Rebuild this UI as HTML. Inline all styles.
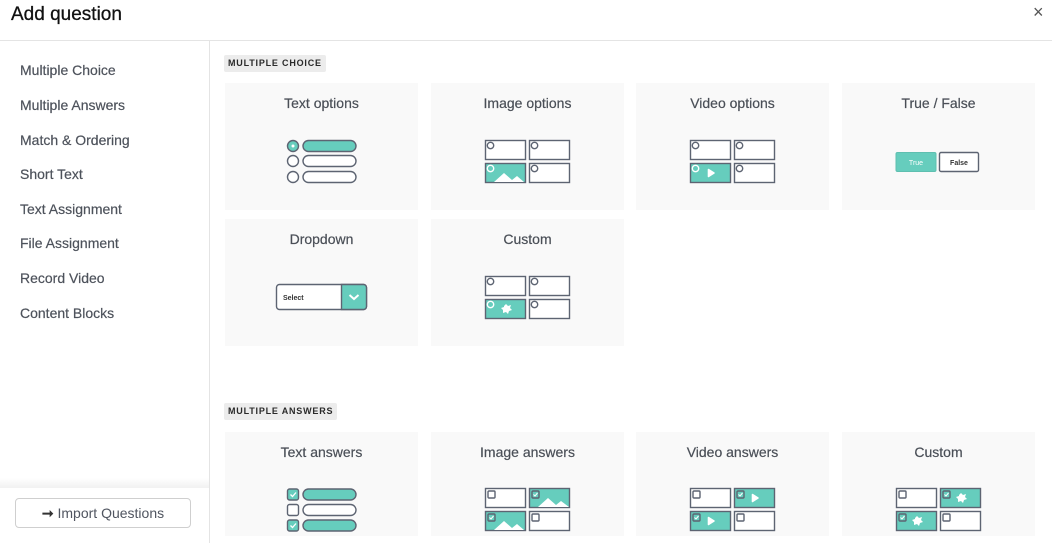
<!DOCTYPE html>
<html><head><meta charset="utf-8"><style>
*{margin:0;padding:0;box-sizing:border-box}
body{width:1052px;height:543px;overflow:hidden;background:#fff;font-family:"Liberation Sans",sans-serif;position:relative;color:#4a4f57}
.hdr{position:absolute;left:0;top:0;width:1052px;height:41px;border-bottom:1px solid #e4e4e4}
.hdr h1{position:absolute;left:11px;top:4px;font-size:19px;font-weight:normal;color:#111;-webkit-text-stroke:0.3px #111}
.close{position:absolute;left:1033px;top:2px;font-size:18px;color:#555}
.side{position:absolute;left:0;top:41px;width:210px;height:502px;border-right:1px solid #e4e4e4}
.side div.it{position:absolute;left:20px;font-size:14px;color:#4d525b;-webkit-text-stroke:0.2px #4d525b}
.shadow{position:absolute;left:0;top:478px;width:209px;height:10px;background:linear-gradient(#fff,#f1f1f1)}
.btn{position:absolute;left:15px;top:498px;width:176px;height:30px;border:1px solid #cfcfcf;border-radius:4px;font-size:14px;color:#505560;text-align:center;line-height:28px}
.lbl{position:absolute;height:17px;background:#ececec;border-radius:2px;font-size:9px;letter-spacing:.8px;color:#2a2a2a;line-height:17px;padding:0 4px;font-weight:bold}
.card{position:absolute;width:193px;height:127px;background:#f9f9f9}
.card .t{position:absolute;left:0;width:100%;top:12px;text-align:center;font-size:14px;color:#4a4f57;-webkit-text-stroke:0.2px #4a4f57}
.card svg{position:absolute}
</style></head><body>
<div class="hdr"><h1>Add question</h1><div class="close">×</div></div>
<div class="side">
<div class="it" style="top:21px">Multiple Choice</div>
<div class="it" style="top:56px">Multiple Answers</div>
<div class="it" style="top:91px">Match &amp; Ordering</div>
<div class="it" style="top:125px">Short Text</div>
<div class="it" style="top:160px">Text Assignment</div>
<div class="it" style="top:194px">File Assignment</div>
<div class="it" style="top:229px">Record Video</div>
<div class="it" style="top:264px">Content Blocks</div>
</div>
<div class="shadow"></div>
<div class="btn"><b style="color:#333">➞</b> Import Questions</div>

<div class="lbl" style="left:224px;top:55px">MULTIPLE CHOICE</div>
<div class="lbl" style="left:224px;top:403px">MULTIPLE ANSWERS</div>

<div class="card" style="left:225px;top:83px"><div class="t">Text options</div>
<svg style="left:61px;top:55px" width="74" height="48" viewBox="0 0 74 48" fill="none" stroke="#5d6472" stroke-width="1.4">
<circle cx="7" cy="8" r="5.5" fill="#66cdbd"/><circle cx="7" cy="8" r="1.5" fill="#fff" stroke="none"/>
<rect x="17" y="2.5" width="53" height="11" rx="5.5" fill="#66cdbd"/>
<circle cx="7" cy="23" r="5.5" fill="#fff"/><rect x="17" y="17.5" width="53" height="11" rx="5.5" fill="#fff"/>
<circle cx="7" cy="39" r="5.5" fill="#fff"/><rect x="17" y="33.5" width="53" height="11" rx="5.5" fill="#fff"/>
</svg></div>

<div class="card" style="left:431px;top:83px"><div class="t">Image options</div>
<svg style="left:53px;top:56px" width="88" height="46" viewBox="0 0 88 46" stroke="#5d6472" stroke-width="1.4" fill="#fff">
<rect x="1.5" y="1.5" width="40" height="19"/><circle cx="6.5" cy="6.5" r="3.2"/>
<rect x="45.5" y="1.5" width="40" height="19"/><circle cx="50.5" cy="6.5" r="3.2"/>
<rect x="1.5" y="24.5" width="40" height="19" fill="#66cdbd"/><circle cx="6.5" cy="29.5" r="3.2" fill="#66cdbd" stroke="#fff"/>
<path d="M10 43 L20 34 L28 41 L33 37 L40 43Z" fill="#fff" stroke="none"/>
<rect x="45.5" y="24.5" width="40" height="19"/><circle cx="50.5" cy="29.5" r="3.2"/>
</svg></div>

<div class="card" style="left:636px;top:83px"><div class="t">Video options</div>
<svg style="left:53px;top:56px" width="88" height="46" viewBox="0 0 88 46" stroke="#5d6472" stroke-width="1.4" fill="#fff">
<rect x="1.5" y="1.5" width="40" height="19"/><circle cx="6.5" cy="6.5" r="3.2"/>
<rect x="45.5" y="1.5" width="40" height="19"/><circle cx="50.5" cy="6.5" r="3.2"/>
<rect x="1.5" y="24.5" width="40" height="19" fill="#66cdbd"/><circle cx="6.5" cy="29.5" r="3.2" fill="#66cdbd" stroke="#fff"/>
<path d="M19.5 30.5 L25 34 L19.5 37.5Z" fill="#fff" stroke="#fff" stroke-width="1.6" stroke-linejoin="round"/>
<rect x="45.5" y="24.5" width="40" height="19"/><circle cx="50.5" cy="29.5" r="3.2"/>
</svg></div>

<div class="card" style="left:842px;top:83px"><div class="t">True / False</div>
<svg style="left:53px;top:68px" width="86" height="22" viewBox="0 0 86 22">
<rect x="1" y="1.5" width="40" height="19" rx="1.5" fill="#66cdbd" stroke="#5fbfb0"/>
<text x="21" y="14" font-size="7" fill="#fff" text-anchor="middle" font-family="Liberation Sans">True</text>
<rect x="44.5" y="1.5" width="39" height="19" rx="1.5" fill="#fff" stroke="#5d6472" stroke-width="1.4"/>
<text x="64" y="14" font-size="7" fill="#333" text-anchor="middle" font-family="Liberation Sans" font-weight="bold">False</text>
</svg></div>

<div class="card" style="left:225px;top:219px"><div class="t">Dropdown</div>
<svg style="left:50px;top:64px" width="94" height="28" viewBox="0 0 94 28">
<rect x="1.5" y="1.5" width="90" height="25" rx="3" fill="#fff" stroke="#5d6472" stroke-width="1.4"/>
<path d="M66.5 1.5 H88.5 a3 3 0 0 1 3 3 V23.5 a3 3 0 0 1 -3 3 H66.5Z" fill="#66cdbd" stroke="#5d6472" stroke-width="1.4"/>
<path d="M74.5 12 L79 16 L83.5 12" fill="none" stroke="#fff" stroke-width="2"/>
<text x="8" y="17" font-size="7" fill="#333" font-family="Liberation Sans" font-weight="bold">Select</text>
</svg></div>

<div class="card" style="left:431px;top:219px"><div class="t">Custom</div>
<svg style="left:53px;top:56px" width="88" height="46" viewBox="0 0 88 46" stroke="#5d6472" stroke-width="1.4" fill="#fff">
<rect x="1.5" y="1.5" width="40" height="19"/><circle cx="6.5" cy="6.5" r="3.2"/>
<rect x="45.5" y="1.5" width="40" height="19"/><circle cx="50.5" cy="6.5" r="3.2"/>
<rect x="1.5" y="24.5" width="40" height="19" fill="#66cdbd"/><circle cx="6.5" cy="29.5" r="3.2" fill="#66cdbd" stroke="#fff"/>
<path d="M20 31 l2 -2 l2 2 l3 -1 l-1 3 l2 2 l-3 1 l-1 3 l-2 -2 l-3 1 l0 -3 l-2 -2 l3 -1Z" fill="#fff" stroke="none"/>
<rect x="45.5" y="24.5" width="40" height="19"/><circle cx="50.5" cy="29.5" r="3.2"/>
</svg></div>

<div class="card" style="left:225px;top:432px;height:104px"><div class="t">Text answers</div>
<svg style="left:61px;top:55px" width="74" height="48" viewBox="0 0 74 48" fill="none" stroke="#5d6472" stroke-width="1.4">
<rect x="1.5" y="2" width="11" height="11" rx="2" fill="#66cdbd"/><path d="M4.5 7.5 l2 2 l3.5 -4" stroke="#fff" stroke-width="1.3"/>
<rect x="17" y="2" width="53" height="11" rx="5.5" fill="#66cdbd"/>
<rect x="1.5" y="17.5" width="11" height="11" rx="2" fill="#fff"/><rect x="17" y="17.5" width="53" height="11" rx="5.5" fill="#fff"/>
<rect x="1.5" y="33" width="11" height="11" rx="2" fill="#66cdbd"/><path d="M4.5 38.5 l2 2 l3.5 -4" stroke="#fff" stroke-width="1.3"/>
<rect x="17" y="33" width="53" height="11" rx="5.5" fill="#66cdbd"/>
</svg></div>

<div class="card" style="left:431px;top:432px;height:104px"><div class="t">Image answers</div>
<svg style="left:53px;top:55px" width="88" height="46" viewBox="0 0 88 46" stroke="#5d6472" stroke-width="1.4" fill="#fff">
<rect x="1.5" y="1.5" width="40" height="19"/><rect x="4" y="4" width="7" height="7" rx="1"/>
<rect x="45.5" y="1.5" width="40" height="19" fill="#66cdbd"/><rect x="48" y="4" width="7" height="7" rx="1" fill="#66cdbd" stroke="#5d6472"/><path d="M49.5 7.5 l1.5 1.5 l2.5 -3" stroke="#fff" fill="none" stroke-width="1"/>
<path d="M54 20 L64 11 L72 18 L77 14 L85 20Z" fill="#fff" stroke="none"/>
<rect x="1.5" y="24.5" width="40" height="19" fill="#66cdbd"/><rect x="4" y="27" width="7" height="7" rx="1" fill="#66cdbd"/><path d="M5.5 30.5 l1.5 1.5 l2.5 -3" stroke="#fff" fill="none" stroke-width="1"/>
<path d="M10 43 L20 34 L28 41 L33 37 L40 43Z" fill="#fff" stroke="none"/>
<rect x="45.5" y="24.5" width="40" height="19"/><rect x="48" y="27" width="7" height="7" rx="1"/>
</svg></div>

<div class="card" style="left:636px;top:432px;height:104px"><div class="t">Video answers</div>
<svg style="left:53px;top:55px" width="88" height="46" viewBox="0 0 88 46" stroke="#5d6472" stroke-width="1.4" fill="#fff">
<rect x="1.5" y="1.5" width="40" height="19"/><rect x="4" y="4" width="7" height="7" rx="1"/>
<rect x="45.5" y="1.5" width="40" height="19" fill="#66cdbd"/><rect x="48" y="4" width="7" height="7" rx="1" fill="#66cdbd"/><path d="M49.5 7.5 l1.5 1.5 l2.5 -3" stroke="#fff" fill="none" stroke-width="1"/>
<path d="M63.5 7.5 L69 11 L63.5 14.5Z" fill="#fff" stroke="#fff" stroke-width="1.6" stroke-linejoin="round"/>
<rect x="1.5" y="24.5" width="40" height="19" fill="#66cdbd"/><rect x="4" y="27" width="7" height="7" rx="1" fill="#66cdbd"/><path d="M5.5 30.5 l1.5 1.5 l2.5 -3" stroke="#fff" fill="none" stroke-width="1"/>
<path d="M19.5 30.5 L25 34 L19.5 37.5Z" fill="#fff" stroke="#fff" stroke-width="1.6" stroke-linejoin="round"/>
<rect x="45.5" y="24.5" width="40" height="19"/><rect x="48" y="27" width="7" height="7" rx="1"/>
</svg></div>

<div class="card" style="left:842px;top:432px;height:104px"><div class="t">Custom</div>
<svg style="left:53px;top:55px" width="88" height="46" viewBox="0 0 88 46" stroke="#5d6472" stroke-width="1.4" fill="#fff">
<rect x="1.5" y="1.5" width="40" height="19"/><rect x="4" y="4" width="7" height="7" rx="1"/>
<rect x="45.5" y="1.5" width="40" height="19" fill="#66cdbd"/><rect x="48" y="4" width="7" height="7" rx="1" fill="#66cdbd"/><path d="M49.5 7.5 l1.5 1.5 l2.5 -3" stroke="#fff" fill="none" stroke-width="1"/>
<path d="M64 8 l2 -2 l2 2 l3 -1 l-1 3 l2 2 l-3 1 l-1 3 l-2 -2 l-3 1 l0 -3 l-2 -2 l3 -1Z" fill="#fff" stroke="none"/>
<rect x="1.5" y="24.5" width="40" height="19" fill="#66cdbd"/><rect x="4" y="27" width="7" height="7" rx="1" fill="#66cdbd"/><path d="M5.5 30.5 l1.5 1.5 l2.5 -3" stroke="#fff" fill="none" stroke-width="1"/>
<path d="M20 31 l2 -2 l2 2 l3 -1 l-1 3 l2 2 l-3 1 l-1 3 l-2 -2 l-3 1 l0 -3 l-2 -2 l3 -1Z" fill="#fff" stroke="none"/>
<rect x="45.5" y="24.5" width="40" height="19"/><rect x="48" y="27" width="7" height="7" rx="1"/>
</svg></div>
</body></html>
